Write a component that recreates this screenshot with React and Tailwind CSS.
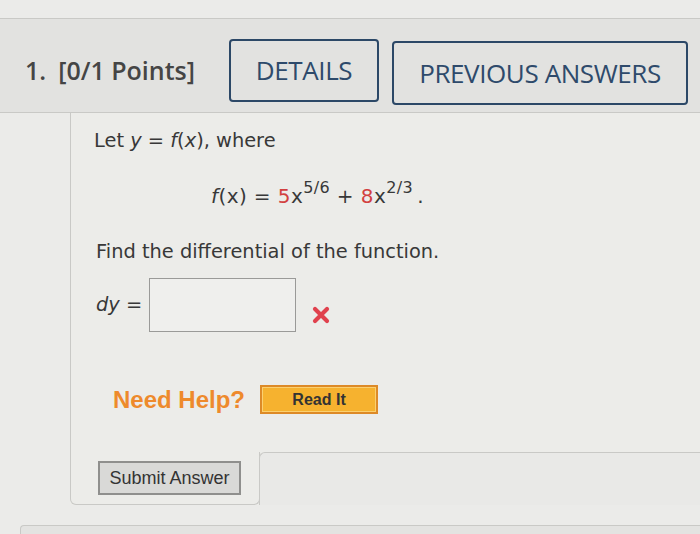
export default function App() {
  const verdana = { fontFamily: '"DejaVu Sans", Verdana, sans-serif' };
  return (
    <div className="w-[700px] h-[534px] overflow-hidden bg-[#ebebe9] pt-[18px]">
      {/* question header */}
      <div className="h-[95px] border-t border-b border-[#c9c9c6] bg-[#e2e2e0] flex items-start pl-[25px] pt-[20px] font-['Open_Sans',sans-serif]">
        <div className="w-[204px] h-[64px] flex items-center text-[25px] font-semibold text-[#454545]">
          <span>1.</span>
          <span className="ml-[12px]">[0/1 Points]</span>
        </div>
        <button className="w-[150px] h-[63px] border-2 border-[#2c4867] rounded-[4px] text-[26px] text-[#2e4a6b] tracking-[-0.4px]">
          DETAILS
        </button>
        <button className="ml-[13px] mt-[2px] w-[296px] h-[64px] border-2 border-[#2c4867] rounded-[4px] text-[26px] text-[#2e4a6b] tracking-[-0.4px]">
          PREVIOUS ANSWERS
        </button>
      </div>

      {/* question body */}
      <div className="ml-[70px] bg-[#ecece9]">
        <div className="border-l border-[#c9c9c6] pl-[23px] pt-[16px] pb-[38px] text-[19.4px] leading-[24px] text-[#383838]" style={verdana}>
          <p>
            Let <i>y</i> = <i>f</i>(<i>x</i>), where
          </p>
          <p className="mt-[31px] ml-[117px] text-[20px] tracking-[0.4px]">
            <i>f</i>(x) = <span className="text-[#d2403f]">5</span>x<sup className="text-[16px] -top-[10px]">5/6</sup> +{' '}
            <span className="text-[#d2403f]">8</span>x<sup className="text-[16px] -top-[10px]">2/3</sup>
            <span className="ml-[4px]">.</span>
          </p>
          <p className="mt-[32px] ml-[2px]">Find the differential of the function.</p>
          <div className="mt-[14px] ml-[2px] flex items-center h-[54px]">
            <span className="w-[53px]">
              <i>dy</i> =
            </span>
            <div className="w-[147px] h-[54px] border border-[#9a9a98] bg-[#efefed]" />
            <svg className="ml-[16px] mt-[20px]" width="18" height="18" viewBox="0 0 18 18">
              <path d="M3 3 L15 15 M15 3 L3 15" stroke="#e0414d" strokeWidth="4.2" strokeLinecap="round" />
            </svg>
          </div>
          <div className="mt-[53px] ml-[19px] flex items-center h-[29px] font-['Liberation_Sans',Arial,sans-serif]">
            <span className="text-[24px] font-bold text-[#ee8a2c]">Need Help?</span>
            <button className="ml-[15px] w-[118px] h-[29px] border-2 border-[#dd8a27] bg-[#f6b22f] shadow-[inset_0_0_0_1px_#fbd070] text-[16px] font-bold text-[#333] leading-none">
              Read It
            </button>
          </div>
        </div>
        <div className="flex h-[53px]">
          <div className="w-[190px] border-l border-b border-r border-[#c9c9c6] rounded-b-[6px] pl-[27px] pt-[9px]">
            <button className="w-[143px] h-[34px] border-2 border-[#8f8f8d] bg-[#d9d9d7] text-[18px] text-[#333] font-['Liberation_Sans',Arial,sans-serif]">
              Submit Answer
            </button>
          </div>
          <div className="-ml-px flex-1 border-t border-l border-[#c9c9c6] rounded-tl-[6px] bg-[#e9e9e7]" />
        </div>
      </div>

      {/* next question */}
      <div className="mt-[20px] ml-[20px] h-[40px] border-t border-l border-[#c9c9c6] rounded-tl-[4px] bg-[#e3e3e1]" />
    </div>
  );
}
